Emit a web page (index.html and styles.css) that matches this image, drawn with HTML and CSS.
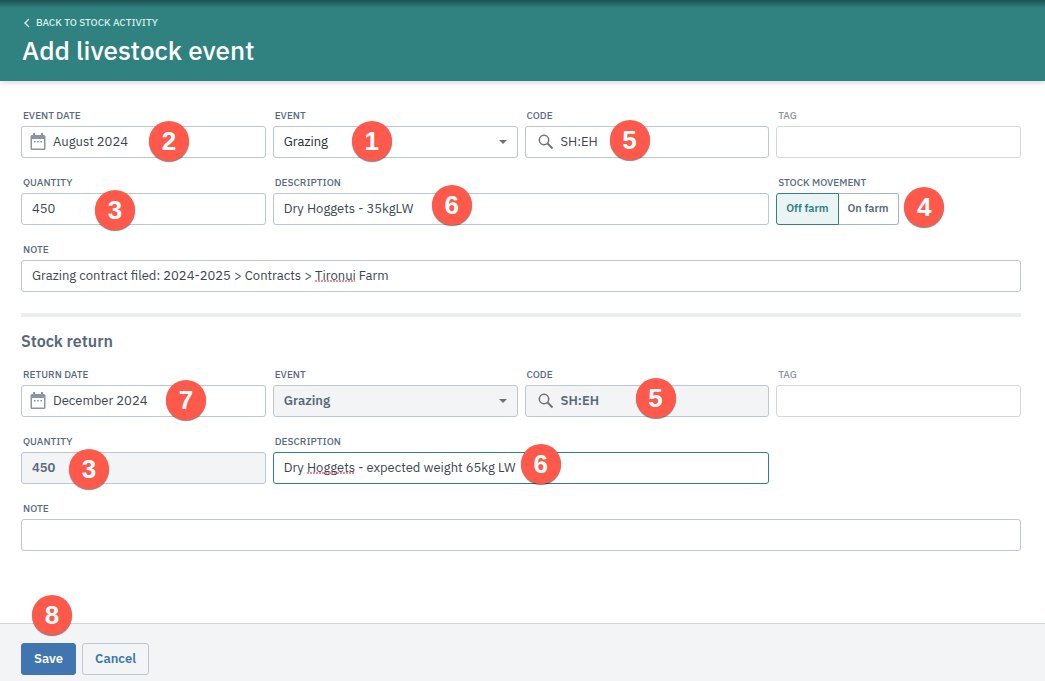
FILE: index.html
```html
<!DOCTYPE html>
<html lang="en">
<head>
  <meta charset="UTF-8">
  <title>Add livestock event</title>
  <meta name="viewport" content="width=device-width, initial-scale=1.0">
  <link rel="stylesheet" href="styles.css">
</head>
<body>
  <!-- Shared icons -->
  <svg class="sprite" aria-hidden="true">
    <symbol id="calendar" viewBox="0 0 16 18">
      <path fill-rule="evenodd" d="M2 2h1V0h2v2h6V0h2v2h1a1.500 1.500 0 0 1 1.500 1.500v12A1.500 1.500 0 0 1 14 17H2a1.500 1.500 0 0 1-1.500-1.500v-12A1.500 1.500 0 0 1 2 2zM2 6v9.500h12V6z"/>
      <path d="M4 8h1.600v1.600H4zM7.200 8h1.600v1.600H7.200zM10.400 8H12v1.600h-1.600z"/>
    </symbol>
    <symbol id="search" viewBox="0 0 16 16">
      <circle cx="6" cy="6" r="4.700" fill="none" stroke="currentColor" stroke-width="1.500"/>
      <path d="M9.500 9.500l5 5" fill="none" stroke="currentColor" stroke-width="1.800"/>
    </symbol>
    <symbol id="caret" viewBox="0 0 8 4">
      <path d="M0 0h8L4 4z"/>
    </symbol>
  </svg>

  <header class="page-header">
    <a href="#" class="back-link">
      <svg viewBox="0 0 6 10" aria-hidden="true"><path d="M5 1L1 5l4 4" fill="none" stroke="currentColor" stroke-width="1.400"/></svg>
      BACK TO STOCK ACTIVITY
    </a>
    <h1>Add livestock event</h1>
  </header>

  <form class="event-form">
    <main>
      <section class="form-grid">
        <div class="field">
          <label for="event-date">EVENT DATE</label>
          <div class="control has-calendar">
            <svg class="icon-calendar"><use href="#calendar"/></svg>
            <input type="text" id="event-date" value="August 2024">
            <span class="step step-event-date">2</span>
          </div>
        </div>
        <div class="field">
          <label for="event">EVENT</label>
          <div class="control">
            <select id="event"><option>Grazing</option></select>
            <svg class="icon-caret"><use href="#caret"/></svg>
            <span class="step step-event">1</span>
          </div>
        </div>
        <div class="field">
          <label for="code">CODE</label>
          <div class="control has-search">
            <svg class="icon-search"><use href="#search"/></svg>
            <input type="text" id="code" value="SH:EH">
            <span class="step step-code">5</span>
          </div>
        </div>
        <div class="field optional">
          <label for="tag">TAG</label>
          <div class="control">
            <input type="text" id="tag">
          </div>
        </div>

        <div class="field">
          <label for="quantity">QUANTITY</label>
          <div class="control">
            <input type="text" id="quantity" value="450">
            <span class="step step-quantity">3</span>
          </div>
        </div>
        <div class="field span-2">
          <label for="description">DESCRIPTION</label>
          <div class="control">
            <input type="text" id="description" value="Dry Hoggets - 35kgLW">
            <span class="step step-description">6</span>
          </div>
        </div>
        <div class="field" role="radiogroup" aria-labelledby="movement-label">
          <span class="label" id="movement-label">STOCK MOVEMENT</span>
          <div class="control toggle">
            <input type="radio" name="movement" id="off-farm" checked>
            <label for="off-farm">Off farm</label>
            <input type="radio" name="movement" id="on-farm">
            <label for="on-farm">On farm</label>
            <span class="step step-movement">4</span>
          </div>
        </div>

        <div class="field span-4">
          <label for="note">NOTE</label>
          <div class="control">
            <input type="text" id="note" spellcheck="false" value="Grazing contract filed: 2024-2025 &gt; Contracts &gt; Tironui Farm">
            <span class="spelling spelling-note"></span>
          </div>
        </div>
      </section>

      <hr>

      <h2>Stock return</h2>
      <section class="form-grid">
        <div class="field">
          <label for="return-date">RETURN DATE</label>
          <div class="control has-calendar">
            <svg class="icon-calendar"><use href="#calendar"/></svg>
            <input type="text" id="return-date" value="December 2024">
            <span class="step step-return-date">7</span>
          </div>
        </div>
        <div class="field">
          <label for="return-event">EVENT</label>
          <div class="control">
            <select id="return-event" disabled><option>Grazing</option></select>
            <svg class="icon-caret"><use href="#caret"/></svg>
          </div>
        </div>
        <div class="field">
          <label for="return-code">CODE</label>
          <div class="control has-search">
            <svg class="icon-search"><use href="#search"/></svg>
            <input type="text" id="return-code" value="SH:EH" disabled>
            <span class="step step-return-code">5</span>
          </div>
        </div>
        <div class="field optional">
          <label for="return-tag">TAG</label>
          <div class="control">
            <input type="text" id="return-tag">
          </div>
        </div>

        <div class="field">
          <label for="return-quantity">QUANTITY</label>
          <div class="control">
            <input type="text" id="return-quantity" value="450" disabled>
            <span class="step step-return-quantity">3</span>
          </div>
        </div>
        <div class="field span-2">
          <label for="return-description">DESCRIPTION</label>
          <div class="control">
            <input type="text" id="return-description" class="active" spellcheck="false" value="Dry Hoggets - expected weight 65kg LW">
            <span class="spelling spelling-description"></span>
            <span class="step step-return-description">6</span>
          </div>
        </div>

        <div class="field span-4">
          <label for="return-note">NOTE</label>
          <div class="control">
            <input type="text" id="return-note">
          </div>
        </div>
      </section>
    </main>

    <footer class="actions">
      <button type="submit" class="btn btn-primary">Save</button>
      <button type="button" class="btn">Cancel</button>
      <span class="step step-save">8</span>
    </footer>
  </form>
</body>
</html>
```
FILE: styles.css
```css
* {
  box-sizing: border-box;
}

body {
  margin: 0;
  min-height: 100vh;
  display: flex;
  flex-direction: column;
  background: #fff;
  color: #3c4655;
  font-family: "IBM Plex Sans", "Noto Sans", sans-serif;
  font-size: 13px;
}

.sprite {
  display: none;
}

svg {
  fill: currentColor;
}

.page-header {
  padding: 16px 22px 13px;
  color: #fff;
  background: linear-gradient(#1d5152, #308280 8px);
  box-shadow: 0 1px 6px rgba(0, 0, 0, 0.2);
}

.back-link {
  display: flex;
  align-items: center;
  gap: 6px;
  padding-left: 2px;
  color: #d5efed;
  font-size: 10px;
  font-weight: 500;
  line-height: 14px;
  text-decoration: none;
}

.back-link svg {
  width: 6px;
  height: 10px;
}

h1 {
  margin: 2px 0 0;
  font-size: 26px;
  font-weight: 500;
  line-height: 36px;
}

.event-form {
  flex: 1;
  display: flex;
  flex-direction: column;
}

main {
  padding: 27px 24px 21px 21px;
}

.form-grid {
  display: grid;
  grid-template-columns: repeat(4, minmax(0, 1fr));
  gap: 17px 7px;
}

.span-2 {
  grid-column: span 2;
}

.span-4 {
  grid-column: span 4;
}

.field > label,
.field > .label {
  display: block;
  margin-bottom: 2px;
  padding-left: 2px;
  color: #58697f;
  font-size: 10px;
  font-weight: 500;
  line-height: 16px;
}

.optional > label {
  color: #8994a3;
}

.control {
  position: relative;
}

.control input[type="text"],
.control select {
  display: block;
  width: 100%;
  height: 32px;
  padding: 0 10px 2px;
  border: 1px solid #bdc6d3;
  border-radius: 3px;
  background: #fff;
  color: #3c4655;
  font: inherit;
  outline: none;
  appearance: none;
}

.control select {
  color: #252c36;
}

.control input[type="text"]:disabled,
.control select:disabled {
  background: #f3f4f6;
  color: #58697f;
  font-weight: 600;
  opacity: 1;
}

.control input.active,
.control input[type="text"]:focus {
  border-color: #308280;
}

.optional input[type="text"] {
  border-color: #d3d8df;
}

.has-calendar input[type="text"] {
  padding-left: 31px;
}

.has-search input[type="text"] {
  padding-left: 35px;
}

.icon-calendar,
.icon-search,
.icon-caret {
  position: absolute;
  pointer-events: none;
}

.icon-calendar {
  top: 7px;
  left: 9px;
  width: 16px;
  height: 18px;
  color: #8995a7;
}

.icon-search {
  top: 8px;
  left: 13px;
  width: 16px;
  height: 16px;
  color: #707070;
}

.icon-caret {
  top: 14px;
  right: 11px;
  width: 8px;
  height: 4px;
  color: #707070;
}

/* Off farm / On farm switch */
.toggle {
  display: flex;
}

.toggle input {
  position: absolute;
  opacity: 0;
}

.toggle label {
  height: 32px;
  padding: 0 9px;
  border: 1px solid #a9b5c5;
  border-radius: 0 3px 3px 0;
  color: #58697f;
  font-size: 11px;
  font-weight: 600;
  line-height: 28px;
}

.toggle label:first-of-type {
  border-radius: 3px 0 0 3px;
}

.toggle label:last-of-type {
  border-left: 0;
}

.toggle input:checked + label {
  border-color: #308280;
  background: #ebf4f5;
  color: #308280;
}

/* Dotted marks under misspelt words */
.spelling {
  position: absolute;
  top: 20px;
  height: 2px;
  background: repeating-linear-gradient(90deg, #f08a96 0 2px, transparent 2px 3px);
}

.spelling-note {
  left: 294px;
  width: 40px;
}

.spelling-description {
  left: 34px;
  width: 47px;
}

hr {
  height: 4px;
  margin: 21px 0 12px;
  border: 0;
  background: #ebeef1;
}

h2 {
  margin: 0 0 14px;
  color: #58697f;
  font-size: 16px;
  font-weight: 600;
  line-height: 24px;
}

.actions {
  position: relative;
  display: flex;
  gap: 6px;
  margin-top: auto;
  padding: 19px 21px 6px;
  border-top: 1px solid #d3d8df;
  background: #f3f4f6;
}

.btn {
  height: 32px;
  padding: 0 12px 2px;
  border: 1px solid #bdc6d3;
  border-radius: 3px;
  background: transparent;
  color: #4075b0;
  font: inherit;
  font-weight: 600;
  cursor: pointer;
}

.btn-primary {
  border-color: #4075b0;
  background: #4075b0;
  color: #fff;
}

/* Numbered step markers */
.step {
  position: absolute;
  z-index: 2;
  width: 40px;
  height: 40px;
  border-radius: 50%;
  background: #ff594c;
  box-shadow: 0 1px 1px rgba(0, 0, 0, 0.5);
  color: #fff;
  font-family: "Liberation Sans", sans-serif;
  font-size: 26px;
  font-weight: 700;
  line-height: 40px;
  text-align: center;
}

.step-event-date { top: -5px; left: 128px; }
.step-event { top: -5px; left: 79px; }
.step-code { top: -6px; left: 85px; }
.step-quantity { top: -3px; left: 74px; }
.step-description { top: -8px; left: 159px; }
.step-movement { top: -6px; left: 128px; }
.step-return-date { top: -5px; left: 145px; }
.step-return-code { top: -7px; left: 111px; }
.step-return-quantity { top: -3px; left: 48px; }
.step-return-description { top: -8px; left: 248px; }
.step-save { top: -29px; left: 32px; }
```
